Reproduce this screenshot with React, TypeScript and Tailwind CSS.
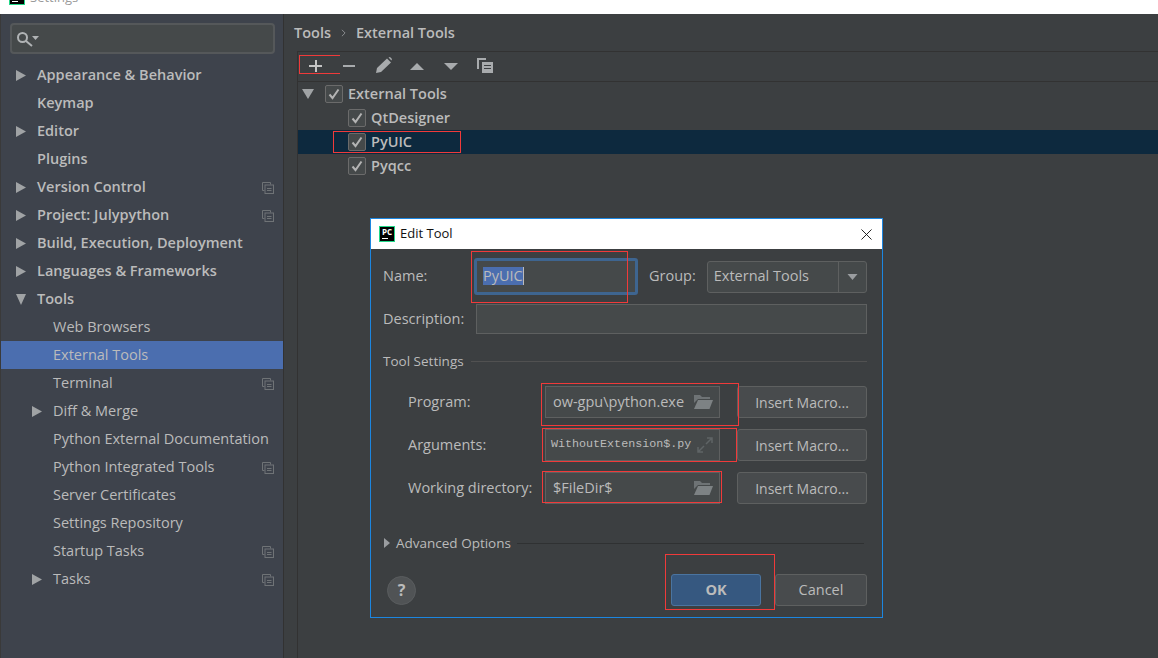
import React from 'react';

function Triangle({ down = false, className = '' }: { down?: boolean; className?: string }) {
  return (
    <svg viewBox="0 0 12 12" preserveAspectRatio="none" className={className} fill="#a0a3a5">
      {down ? <path d="M0 0h12L6 12z" /> : <path d="M0 0l12 6-12 6z" />}
    </svg>
  );
}

function ProjectIcon() {
  return (
    <svg viewBox="0 0 12 12" className="h-[12px] w-[12px]" fill="none" stroke="#6f7376" strokeWidth="1">
      <path d="M8.5 2.5V.5H.5v8h2" />
      <rect x="3" y="3" width="8.5" height="8.5" fill="#3e434c" />
      <path d="M5 6.5h4.5M5 8.5h4.5" />
    </svg>
  );
}

function Check() {
  return (
    <span className="flex h-[18px] w-[18px] shrink-0 items-center justify-center rounded-[2px] border border-[#6b6b6b] bg-[#45494a]">
      <svg viewBox="0 0 12 12" className="h-[12px] w-[12px]" fill="none" stroke="#b4b4b4" strokeWidth="2">
        <path d="M1.5 6.5l3 3.5 6-8.5" />
      </svg>
    </span>
  );
}

function PcLogo() {
  return (
    <span className="relative block h-[16px] w-[16px] shrink-0 border border-[#21d789] bg-black">
      <span className="absolute left-[2px] top-0 text-[8px] font-bold leading-[10px] text-white">PC</span>
      <span className="absolute bottom-[2px] left-[2px] h-[1px] w-[6px] bg-white" />
    </span>
  );
}

function FolderIcon() {
  return (
    <svg viewBox="0 0 20 16" className="h-[16px] w-[20px]" fill="#6e7375">
      <path d="M1 1h6l2 2h8v2H5L1 9z" />
      <path d="M5 6h15l-3.5 9H1z" fill="#7d8284" />
    </svg>
  );
}

function ExpandIcon() {
  return (
    <svg viewBox="0 0 16 16" className="h-[16px] w-[16px]" fill="none" stroke="#5f6466" strokeWidth="1.5">
      <path d="M9 7l6-6M10 1h5v5M7 9l-6 6M1 10v5h5" />
    </svg>
  );
}

type NavItem = { label: string; bold?: boolean; arrow?: boolean | 'down'; sub?: boolean; project?: boolean; active?: boolean };

const nav: NavItem[] = [
  { label: 'Appearance & Behavior', bold: true, arrow: true },
  { label: 'Keymap', bold: true },
  { label: 'Editor', bold: true, arrow: true },
  { label: 'Plugins', bold: true },
  { label: 'Version Control', bold: true, arrow: true, project: true },
  { label: 'Project: Julypython', bold: true, arrow: true, project: true },
  { label: 'Build, Execution, Deployment', bold: true, arrow: true },
  { label: 'Languages & Frameworks', bold: true, arrow: true },
  { label: 'Tools', bold: true, arrow: 'down' },
  { label: 'Web Browsers', sub: true },
  { label: 'External Tools', sub: true, active: true },
  { label: 'Terminal', sub: true, project: true },
  { label: 'Diff & Merge', sub: true, arrow: true },
  { label: 'Python External Documentation', sub: true },
  { label: 'Python Integrated Tools', sub: true, project: true },
  { label: 'Server Certificates', sub: true },
  { label: 'Settings Repository', sub: true },
  { label: 'Startup Tasks', sub: true, project: true },
  { label: 'Tasks', sub: true, arrow: true, project: true },
];

function NavRow({ item }: { item: NavItem }) {
  return (
    <div className={`relative flex h-[28px] items-center ${item.active ? 'bg-[#4b6eaf]' : ''}`}>
      {item.arrow && (
        <Triangle
          down={item.arrow === 'down'}
          className={`absolute top-[9px] h-[11px] w-[10px] ${item.sub ? 'left-[31px]' : 'left-[15px]'}`}
        />
      )}
      <span className={`text-[14.5px] text-[#bbbbbb] ${item.sub ? 'pl-[52px]' : 'pl-[36px]'} ${item.bold ? 'font-semibold' : ''}`}>
        {item.label}
      </span>
      {item.project && (
        <span className="absolute right-[9px] top-[9px]">
          <ProjectIcon />
        </span>
      )}
    </div>
  );
}

function TreeRow({ label, selected = false }: { label: string; selected?: boolean }) {
  return (
    <div className={`flex h-[24px] items-center gap-[5px] pl-[50px] ${selected ? 'bg-[#0d293e]' : ''}`}>
      <Check />
      <span className="text-[14.5px] font-semibold text-[#bbbbbb]">{label}</span>
    </div>
  );
}

function MacroButton({ className = '' }: { className?: string }) {
  return (
    <span className={`flex h-[32px] w-[130px] items-center justify-center rounded-[3px] border border-[#5e6060] bg-[#484b4d] pt-[1px] text-[14px] text-[#bbbbbb] ${className}`}>
      Insert Macro...
    </span>
  );
}

function Overlay({ className }: { className: string }) {
  return <div className={`pointer-events-none absolute border border-[#f03a3a] ${className}`} />;
}

function EditToolDialog() {
  return (
    <div className="absolute left-[370px] top-[218px] flex h-[400px] w-[513px] flex-col border border-[#1c86e0] bg-[#3c3f41] text-[14.5px] text-[#bbbbbb]">
      <div className="flex h-[30px] shrink-0 items-center bg-white pl-[8px] pr-[10px]">
        <PcLogo />
        <span className="ml-[5px] text-[13px] text-[#111111]">Edit Tool</span>
        <svg viewBox="0 0 12 12" className="ml-auto h-[11px] w-[11px]" fill="none" stroke="#111111" strokeWidth="1">
          <path d="M.5.5l11 11M11.5.5l-11 11" />
        </svg>
      </div>

      <div className="flex h-[55px] shrink-0 items-center pl-[12px]">
        <span className="w-[91px] pb-[2px]">Name:</span>
        <div className="flex h-[37px] w-[164px] items-center rounded-[3px] border-[3px] border-[#3e6590] bg-[#45494a] pb-[2px] pl-[6px]">
          <span className="border-r border-[#bbbbbb] bg-[#4b6eaf] leading-[18px]">PyUIC</span>
        </div>
        <span className="ml-[11px] pb-[2px]">Group:</span>
        <div className="ml-[11px] flex h-[32px] w-[160px] items-center rounded-[3px] border border-[#5e6060] bg-[#45494a]">
          <span className="flex-1 pb-[2px] pl-[6px]">External Tools</span>
          <span className="flex h-full w-[28px] items-center justify-center border-l border-[#5e6060]">
            <svg viewBox="0 0 10 6" className="h-[6px] w-[11px]" fill="#9a9da0"><path d="M0 0h10L5 6z" /></svg>
          </span>
        </div>
      </div>

      <div className="flex h-[30px] shrink-0 items-center pl-[12px] pr-[15px]">
        <span className="w-[93px]">Description:</span>
        <div className="h-full flex-1 border border-[#5e6060] bg-[#45494a]" />
      </div>

      <div className="mt-[17px] flex h-[20px] shrink-0 items-center pl-[12px] pr-[15px]">
        <span className="text-[13.5px]">Tool Settings</span>
        <div className="ml-[7px] h-[1px] flex-1 bg-[#515151]" />
      </div>

      <div className="mt-[15px] flex shrink-0 flex-col gap-[11px] pl-[37px] pr-[15px]">
        <div className="flex h-[32px] items-center">
          <span className="w-[137px]">Program:</span>
          <div className="flex h-full w-[175px] items-center justify-between border border-[#5e6060] bg-[#45494a] pl-[7px] pr-[6px]">
            <span>ow-gpu\python.exe</span>
            <FolderIcon />
          </div>
          <MacroButton className="ml-auto" />
        </div>
        <div className="flex h-[32px] items-center">
          <span className="w-[137px]">Arguments:</span>
          <div className="flex h-full w-[175px] items-center justify-between border border-[#5e6060] bg-[#45494a] pl-[5px] pr-[6px]">
            <span className="font-['Liberation_Mono',monospace] text-[11.7px]">WithoutExtension$.py</span>
            <ExpandIcon />
          </div>
          <MacroButton className="ml-auto" />
        </div>
        <div className="flex h-[32px] items-center">
          <span className="w-[137px]">Working directory:</span>
          <div className="flex h-full w-[175px] items-center justify-between border border-[#5e6060] bg-[#45494a] pl-[7px] pr-[6px]">
            <span>$FileDir$</span>
            <FolderIcon />
          </div>
          <MacroButton className="ml-auto" />
        </div>
      </div>

      <div className="mt-[29px] flex h-[20px] shrink-0 items-center pl-[13px] pr-[18px]">
        <svg viewBox="0 0 6 10" className="h-[10px] w-[6px]" fill="#9a9da0"><path d="M0 0l6 5-6 5z" /></svg>
        <span className="ml-[6px] text-[13.5px]">Advanced Options</span>
        <div className="ml-[6px] h-[1px] flex-1 bg-[#2f3132]" />
      </div>

      <div className="mt-[21px] flex h-[32px] shrink-0 items-center pl-[16px] pr-[15px]">
        <span className="flex h-[29px] w-[29px] items-center justify-center rounded-full border border-[#5a5d5f] bg-[#505355] text-[16px] font-bold text-[#bbbbbb]">?</span>
        <span className="ml-auto flex h-[32px] w-[90px] items-center justify-center rounded-[3px] border border-[#4a74a0] bg-[#365880] font-bold">OK</span>
        <span className="ml-[14px] flex h-[32px] w-[92px] items-center justify-center rounded-[3px] border border-[#5e6060] bg-[#484b4d]">Cancel</span>
      </div>
    </div>
  );
}

export default function App() {
  return (
    <div className={`relative flex h-[658px] w-[1158px] flex-col overflow-hidden bg-white font-["Open_Sans","Noto_Sans",sans-serif]`}>
      <div className="relative h-[14px] shrink-0 overflow-hidden bg-white">
        <span className="absolute left-[9px] top-[-11px]">
          <PcLogo />
        </span>
        <span className="absolute left-[30px] top-[-12px] text-[13px] text-[#9a9a9a]">Settings</span>
      </div>

      <div className="flex min-h-0 flex-1 border-l border-[#3a3a3a]">
        <aside className="flex w-[282px] shrink-0 flex-col bg-[#3e434c]">
          <div className="ml-[9px] mt-[9px] flex h-[31px] w-[265px] items-center rounded-[4px] border-2 border-[#55585a] bg-[#45494a] pl-[5px]">
            <svg viewBox="0 0 22 16" className="h-[16px] w-[22px]" fill="none" stroke="#b0b3b5" strokeWidth="2">
              <circle cx="5.5" cy="6.5" r="4.5" />
              <path d="M9 10l6 5" />
              <path d="M15 5h7l-3.5 4z" fill="#b0b3b5" stroke="none" />
            </svg>
          </div>
          <nav className="mt-[7px]">
            {nav.map((item) => (
              <NavRow key={item.label} item={item} />
            ))}
          </nav>
        </aside>

        <main className="flex min-w-0 flex-1 flex-col border-l border-[#323232] bg-[#3c3f41]">
          <div className="flex h-[37px] shrink-0 items-center pl-[10px] text-[14.5px] font-semibold text-[#bbbbbb]">
            <span>Tools</span>
            <svg viewBox="0 0 6 10" className="mx-[10px] h-[8px] w-[5px]" fill="none" stroke="#9a9da0"><path d="M1 1l4 4-4 4" /></svg>
            <span>External Tools</span>
          </div>

          <div className="ml-[13px] flex min-h-0 flex-1 flex-col border-l border-t border-[#323232]">
            <div className="flex h-[30px] shrink-0 items-start border-b border-[#323232] pt-[5px]">
              <svg viewBox="0 0 200 18" className="h-[18px] w-[200px]" fill="#a8abad">
                <path d="M11 8h13v2H11zM17 3h2v12h-2z" fill="#c4c4c4" />
                <path d="M45 8h12v2H45z" />
                <path d="M78 16l1-5L89 1.5l4 4L83 15zM90.500 0.500l1.500-.5 2 2-.5 1.500z" />
                <path d="M112 13l7-7 7 7z" />
                <path d="M146 6h14l-7 7z" />
                <path d="M179 1h9v2h-7v9h-2z" />
                <path d="M184 5h11v11h-11zM186 8v1h7V8zM186 11v1h7v-1z" fillRule="evenodd" />
              </svg>
            </div>
            <div className="flex h-[24px] shrink-0 items-center pl-[4px]">
              <Triangle down className="h-[10px] w-[12px]" />
              <span className="ml-[11px]"><Check /></span>
              <span className="ml-[5px] text-[14.5px] font-semibold text-[#bbbbbb]">External Tools</span>
            </div>
            <TreeRow label="QtDesigner" />
            <TreeRow label="PyUIC" selected />
            <TreeRow label="Pyqcc" />
          </div>
        </main>
      </div>

      <EditToolDialog />

      <Overlay className="left-[299px] top-[55px] h-[19px] w-[41px] border-r-0" />
      <Overlay className="left-[333px] top-[131px] h-[22px] w-[128px]" />
      <Overlay className="left-[471px] top-[251px] h-[52px] w-[157px]" />
      <Overlay className="left-[541px] top-[383px] h-[43px] w-[198px]" />
      <Overlay className="left-[542px] top-[428px] h-[34px] w-[195px]" />
      <Overlay className="left-[542px] top-[471px] h-[32px] w-[180px]" />
      <Overlay className="left-[665px] top-[554px] h-[56px] w-[110px]" />
    </div>
  );
}
